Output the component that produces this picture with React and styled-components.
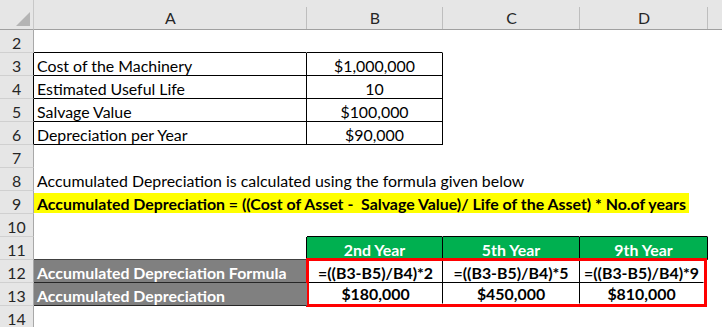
import React from 'react';
import styled, { createGlobalStyle } from 'styled-components';

const GlobalStyle = createGlobalStyle`
  html, body {
    margin: 0;
    background: #FFF;
  }
  body {
    font-family: Lato, "Open Sans", sans-serif;
    color: #000;
  }
`;

const Sheet = styled.div`
  display: grid;
  grid-template-columns: 34px 273px 136px 137px 128px 1fr;
  grid-template-rows: 30px repeat(13, 23px);
  width: 722px;
  font-size: 15.9px;
`;

const Corner = styled.div`
  background: #E6E6E6;
  border-bottom: 1px solid #A0A0A0;
  border-right: 1px solid #C8C8C8;
  box-sizing: border-box;
  position: relative;
  &:after {
    content: "";
    position: absolute;
    right: 3px;
    bottom: 3px;
    border-style: solid;
    border-width: 0 0 14px 14px;
    border-color: transparent transparent #B4B4B4 transparent;
  }
`;

const ColHead = styled.div`
  background: #E6E6E6;
  border-bottom: 1px solid #A0A0A0;
  box-sizing: border-box;
  display: flex;
  align-items: center;
  justify-content: center;
  padding-top: 6px;
  color: #262626;
  position: relative;
  &:after {
    content: "";
    position: absolute;
    right: 0;
    top: 7px;
    bottom: 0;
    width: 1px;
    background: ${p => p.$last ? 'transparent' : '#BEBEBE'};
  }
`;

const RowHead = styled.div`
  background: #E6E6E6;
  box-sizing: border-box;
  border-bottom: 1px solid #D0D0D0;
  border-right: 1px solid ${p => p.$edge || '#A8A8A8'};
  display: flex;
  align-items: center;
  justify-content: center;
  padding-top: 2px;
  color: #262626;
`;

const Cell = styled.div`
  grid-column: span ${p => p.$span || 1};
  box-sizing: border-box;
  border-right: 1px solid ${p => p.$r || 'transparent'};
  border-bottom: 1px solid ${p => p.$b || 'transparent'};
  background: ${p => p.$fill || 'transparent'};
  color: ${p => p.$color || '#000'};
  font-weight: ${p => p.$bold ? 700 : 400};
  display: flex;
  align-items: center;
  justify-content: ${p => p.$center ? 'center' : 'flex-start'};
  padding: 2px 3px 0;
  white-space: nowrap;
  overflow: visible;
`;

const Highlight = styled.span`
  display: flex;
  align-items: center;
  height: 100%;
  margin-left: -3px;
  padding: 0 3px;
  background: #FFFF00;
  font-weight: 700;
`;

const RedBox = styled.div`
  grid-column: span 3;
  grid-row: span 2;
  margin: -2px 1px -1px -1px;
  border: 3px solid #FF0000;
  background: #FFF;
  display: grid;
  grid-template-columns: 134px 137px 1fr;
  grid-template-rows: 22px 1fr;
`;

const BoxCell = styled.div`
  box-sizing: border-box;
  border-right: 1px solid ${p => p.$r ? '#000' : 'transparent'};
  border-bottom: 1px solid ${p => p.$b ? '#000' : 'transparent'};
  display: flex;
  align-items: center;
  justify-content: center;
  padding-top: 1px;
  font-weight: 700;
  white-space: nowrap;
`;

const inputs = [
  ['Cost of the Machinery', '$1,000,000'],
  ['Estimated Useful Life', '10'],
  ['Salvage Value', '$100,000'],
  ['Depreciation per Year', '$90,000'],
];

const years = [
  { label: '2nd Year', formula: '=((B3-B5)/B4)*2', value: '$180,000' },
  { label: '5th Year', formula: '=((B3-B5)/B4)*5', value: '$450,000' },
  { label: '9th Year', formula: '=((B3-B5)/B4)*9', value: '$810,000' },
];

const App = () => {
  return (
    <>
      <GlobalStyle />
      <Sheet>
        <Corner />
        {['A', 'B', 'C', 'D'].map(c => <ColHead key={c}>{c}</ColHead>)}
        <ColHead $last />

        <RowHead>2</RowHead>
        <Cell $b="#000" />
        <Cell $b="#000" />
        <Cell $span={3} />

        {inputs.map(([label, value], i) => (
          <React.Fragment key={label}>
            <RowHead $edge="#000">{i + 3}</RowHead>
            <Cell $r="#000" $b="#000">{label}</Cell>
            <Cell $r="#000" $b="#000" $center>{value}</Cell>
            <Cell $span={3} />
          </React.Fragment>
        ))}

        <RowHead>7</RowHead>
        <Cell $span={5} />

        <RowHead>8</RowHead>
        <Cell $span={5}>Accumulated Depreciation is calculated using the formula given below</Cell>

        <RowHead>9</RowHead>
        <Cell $span={5}>
          <Highlight>Accumulated Depreciation = ((Cost of Asset -&nbsp; Salvage Value)/ Life of the Asset) * No.of years</Highlight>
        </Cell>

        <RowHead>10</RowHead>
        <Cell />
        <Cell $b="#000" />
        <Cell $b="#000" />
        <Cell $b="#000" />
        <Cell />

        <RowHead>11</RowHead>
        <Cell $r="#000" $b="#404040" />
        {years.map(y => (
          <Cell key={y.label} $fill="#00B050" $color="#FFF" $r="#000" $bold $center>{y.label}</Cell>
        ))}
        <Cell />

        <RowHead>12</RowHead>
        <Cell $fill="#808080" $color="#FFF" $b="#262626" $bold>Accumulated Depreciation Formula</Cell>
        <RedBox>
          {years.map((y, i) => (
            <BoxCell key={y.formula} $r={i < 2} $b>{y.formula}</BoxCell>
          ))}
          {years.map((y, i) => (
            <BoxCell key={y.value} $r={i < 2}>{y.value}</BoxCell>
          ))}
        </RedBox>
        <Cell />

        <RowHead>13</RowHead>
        <Cell $fill="#808080" $color="#FFF" $b="#262626" $bold>Accumulated Depreciation</Cell>
        <Cell />

        <RowHead>14</RowHead>
        <Cell $span={5} />
      </Sheet>
    </>
  );
};

export default App;
